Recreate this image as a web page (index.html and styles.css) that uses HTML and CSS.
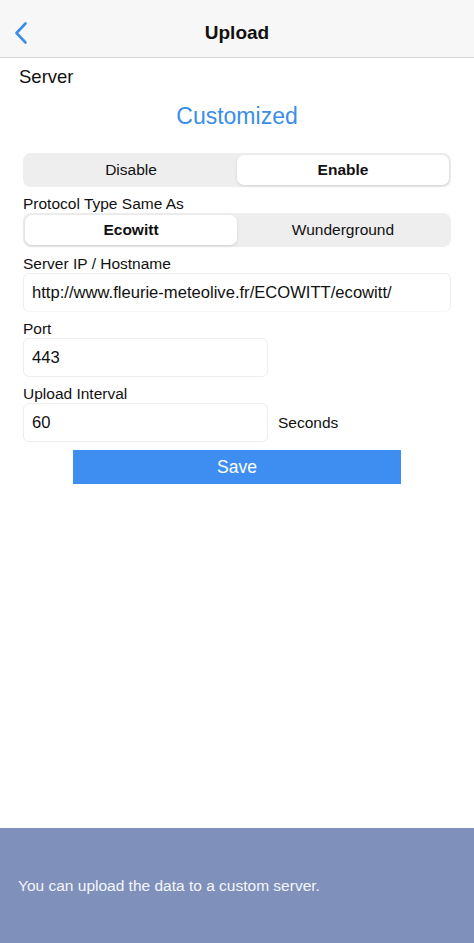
FILE: index.html
```html
<!DOCTYPE html>
<html>
<head>
<meta charset="utf-8">
<link rel="stylesheet" href="styles.css">
</head>
<body>
<div class="page">
  <header class="navbar">
    <span class="back">
      <svg width="16" height="24" viewBox="0 0 16 24"><path d="M12.5 2.5 L3.5 12 L12.5 21.5" fill="none" stroke="#3b8ee8" stroke-width="2.6" stroke-linecap="round" stroke-linejoin="round"/></svg>
    </span>
    <span class="title">Upload</span>
  </header>
  <main class="content">
    <div class="section-label">Server</div>
    <div class="mode">Customized</div>
    <div class="form">
      <div class="segment seg-first">
        <div class="seg-item">Disable</div>
        <div class="seg-item active">Enable</div>
      </div>
      <div class="label">Protocol Type Same As</div>
      <div class="segment">
        <div class="seg-item active">Ecowitt</div>
        <div class="seg-item">Wunderground</div>
      </div>
      <div class="label">Server IP / Hostname</div>
      <div class="input input-full">http://www.fleurie-meteolive.fr/ECOWITT/ecowitt/</div>
      <div class="label">Port</div>
      <div class="input input-half">443</div>
      <div class="label">Upload Interval</div>
      <div class="row">
        <div class="input input-half">60</div>
        <span class="unit">Seconds</span>
      </div>
    </div>
    <div class="save-wrap"><button class="save">Save</button></div>
  </main>
  <footer class="footer">You can upload the data to a custom server.</footer>
</div>
</body>
</html>
```
FILE: styles.css
```css
html, body {
  margin: 0;
  padding: 0;
  background: #ffffff;
}
body {
  font-family: "Liberation Sans", Arial, sans-serif;
  color: #111;
}
.page {
  width: 474px;
  height: 943px;
  display: flex;
  flex-direction: column;
  overflow: hidden;
}
.navbar {
  height: 57px;
  background: #f7f7f7;
  border-bottom: 1px solid #d6d6d6;
  display: flex;
  align-items: center;
  justify-content: center;
  position: relative;
  flex-shrink: 0;
}
.back {
  position: absolute;
  left: 13px;
  top: 21px;
  width: 16px;
  height: 24px;
}
.title {
  font-size: 19px;
  font-weight: bold;
  color: #111;
  margin-top: 8px;
}
.content {
  flex: 1;
  display: flex;
  flex-direction: column;
}
.section-label {
  font-size: 18.5px;
  padding-left: 19px;
  margin-top: 9px;
  line-height: 20px;
}
.mode {
  text-align: center;
  color: #3a8ee6;
  font-size: 23px;
  margin-top: 16px;
  line-height: 26px;
}
.form {
  padding: 0 23px;
  display: flex;
  flex-direction: column;
}
.segment {
  display: flex;
  background: #eeeeef;
  border-radius: 8px;
  padding: 2px;
  height: 30px;
}
.seg-first {
  margin-top: 24px;
}
.seg-item {
  flex: 1;
  display: flex;
  align-items: center;
  justify-content: center;
  font-size: 15.5px;
  color: #111;
  border-radius: 7px;
}
.seg-item.active {
  background: #ffffff;
  font-weight: bold;
  box-shadow: 0 1px 3px rgba(0,0,0,0.12);
}
.label {
  font-size: 15.5px;
  line-height: 18px;
  margin-top: 8px;
}
.input {
  height: 39px;
  box-sizing: border-box;
  border: 1px solid #ededed;
  border-radius: 6px;
  display: flex;
  align-items: center;
  padding-left: 8px;
  font-size: 16.6px;
  color: #111;
  background: #fff;
}
.input-full {
  width: 428px;
  border-bottom-color: #f6f6f6;
}
.input-half {
  width: 245px;
}
.row {
  display: flex;
  align-items: center;
}
.unit {
  font-size: 15.5px;
  margin-left: 10px;
}
.save-wrap {
  display: flex;
  justify-content: center;
  margin-top: 8px;
}
.save {
  width: 328px;
  height: 34px;
  border: none;
  background: #3d8ef0;
  color: #fff;
  font-family: "Liberation Sans", Arial, sans-serif;
  font-size: 17.5px;
  padding: 0;
}
.footer {
  height: 115px;
  flex-shrink: 0;
  background: #7f91ba;
  color: #f4f6fb;
  font-size: 15.5px;
  display: flex;
  align-items: center;
  padding-left: 18px;
}
```
